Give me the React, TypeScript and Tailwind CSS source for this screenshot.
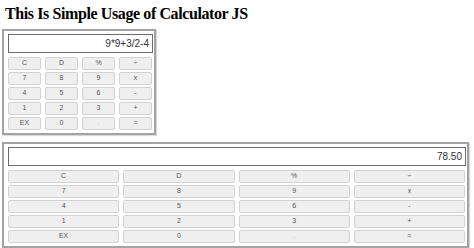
import React from "react";

const keys = [
  ["C", "D", "%", "÷"],
  ["7", "8", "9", "x"],
  ["4", "5", "6", "-"],
  ["1", "2", "3", "+"],
  ["EX", "0", ".", "="],
];

function Calc({ value, wide }: { value: string; wide?: boolean }) {
  return (
    <div
      className={
        "border-2 border-[#a3a3a3] pl-[4px] pr-[2px] pt-[3px] pb-[3px] shadow-[1px_1px_1px_rgba(0,0,0,0.15)] " +
        (wide ? "w-[467px]" : "w-[154px]")
      }
    >
      <div className="h-[19px] border border-[#6b6b6b] bg-white flex items-center justify-end pr-[3px] text-[10px] text-[#333] mr-[-1px]">
        {value}
      </div>
      <div className="mt-[4px] flex flex-col gap-[2px]">
        {keys.map((row, i) => (
          <div key={i} className="flex gap-[4px]">
            {row.map((k) => (
              <div
                key={k}
                className={
                  "flex-1 h-[13px] rounded-[2px] border border-[#d2d2d2] bg-[#efefef] flex items-center justify-center text-[7px] " +
                  (k === "." ? "text-[#bbb]" : "text-[#555]")
                }
              >
                {k}
              </div>
            ))}
          </div>
        ))}
      </div>
    </div>
  );
}

export default function App() {
  return (
    <div className="w-[474px] h-[248px] bg-white px-[2px] pt-[3px]" style={{ fontFamily: '"Liberation Sans", Arial, sans-serif' }}>
      <h1
        className="ml-[3px] text-[16px] tracking-[-0.4px] font-bold leading-[22px] text-black"
        style={{ fontFamily: '"Liberation Serif", "Times New Roman", serif' }}
      >
        This Is Simple Usage of Calculator JS
      </h1>
      <div className="mt-[4px] flex flex-col gap-[7px]">
        <Calc value="9*9+3/2-4" />
        <Calc value="78.50" wide />
      </div>
    </div>
  );
}
